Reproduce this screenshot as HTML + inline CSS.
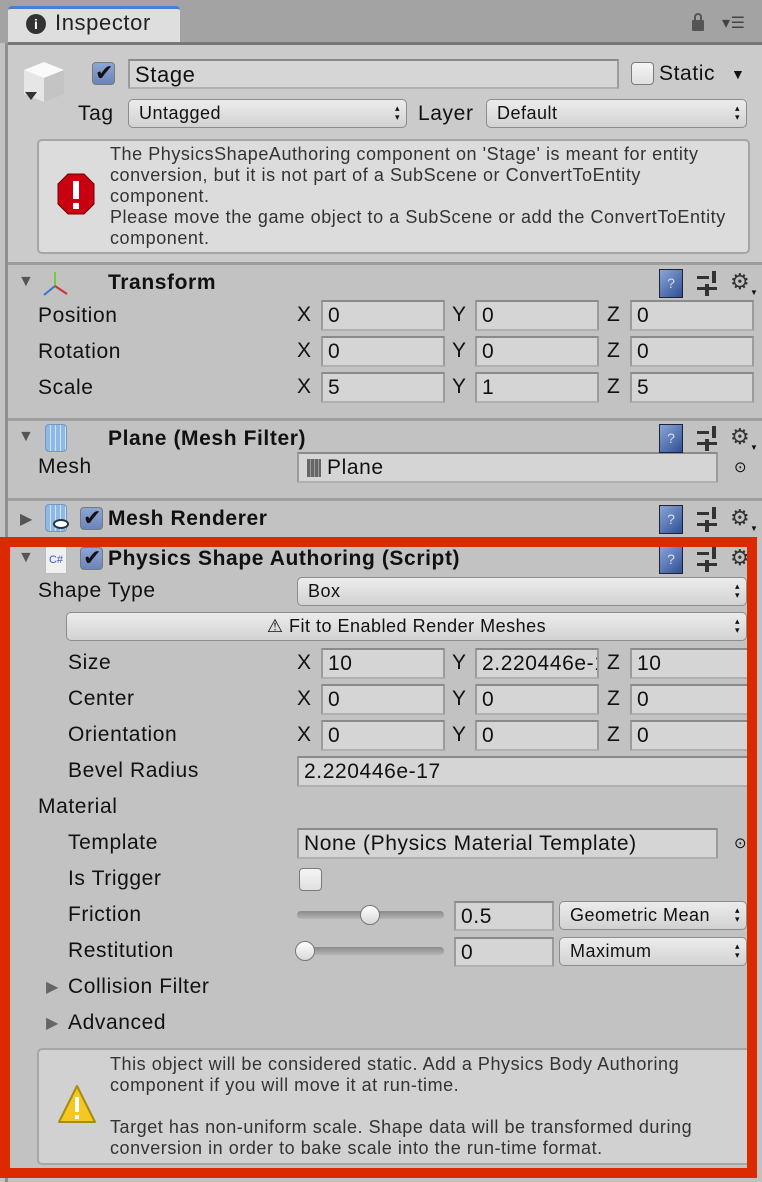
<!DOCTYPE html>
<html><head><meta charset="utf-8"><style>
*{box-sizing:border-box;margin:0;padding:0}
body{width:762px;height:1182px;background:#c2c2c2;font-family:"Liberation Sans",sans-serif;color:#111;position:relative;overflow:hidden}
.a{position:absolute}
.t{position:absolute;font-size:21px;line-height:24px;white-space:nowrap;letter-spacing:0.6px}
.f{position:absolute;background:#d5d5d5;border:2px solid #9b9b9b;border-top-color:#8a8a8a;border-bottom-color:#b0b0b0;font-size:21px;line-height:27px;padding-left:5px;overflow:hidden;white-space:nowrap;letter-spacing:0.6px}
.p{position:absolute;background:linear-gradient(#ececec,#d2d2d2);border:1px solid #8c8c8c;border-radius:5px;font-size:18px;line-height:27px;padding-left:10px;white-space:nowrap;letter-spacing:0.5px}
.p:after{content:"▴\A▾";white-space:pre;position:absolute;right:6px;top:4px;font-size:9px;line-height:9px}
.sep{position:absolute;left:8px;right:0;height:3px;background:#9d9d9d}
.hb{position:absolute;background:#d1d1d1;border:2px solid #a6a6a6;border-radius:5px}
.ht{position:absolute;font-size:18px;line-height:21px;color:#333;white-space:nowrap;letter-spacing:0.55px}
.cb{position:absolute;width:23px;height:23px;border:1px solid #7a7a7a;border-radius:4px;background:linear-gradient(#f5f5f5,#e0e0e0)}
.cbc{background:linear-gradient(#8ea6d6,#6b84b8);}
.cbc:after{content:"✔";position:absolute;left:2px;top:-3px;font-size:22px;color:#111}
.tri{position:absolute;font-size:16px;color:#555}
</style></head><body>
<div class="a" style="left:0;top:0;width:762px;height:43px;background:#a3a3a3"></div>
<div class="a" style="left:8px;top:6px;width:172px;height:37px;background:#dedede;border-top:3px solid #4a7fd0;border-radius:4px 4px 0 0"></div>
<div class="a" style="left:26px;top:14px;width:20px;height:20px;border-radius:50%;background:#333;color:#fff;font-size:14px;font-weight:bold;text-align:center;line-height:20px">i</div>
<div class="t" style="left:55px;top:11px;font-size:22px;color:#222">Inspector</div>
<div class="a" style="left:692px;top:20px;width:12px;height:11px;background:#555;border-radius:1px"></div>
<div class="a" style="left:694px;top:13px;width:8px;height:9px;border:2px solid #555;border-bottom:0;border-radius:4px 4px 0 0"></div>
<div class="t" style="left:722px;top:12px;font-size:16px;color:#444">▾☰</div>
<div class="a" style="left:8px;top:42px;width:754px;height:3px;background:#777"></div>
<div class="a" style="left:8px;top:45px;width:754px;height:217px;background:#cbcbcb"></div>
<div class="a" style="left:5px;top:43px;width:3px;height:1139px;background:#8f8f8f"></div>
<svg class="a" style="left:20px;top:58px" width="48" height="48"><polygon points="4,12 24,4 44,12 24,20" fill="#fafafa"/><polygon points="4,12 24,20 24,44 4,36" fill="#e6e6e6"/><polygon points="44,12 24,20 24,44 44,36" fill="#c4c4c4"/><polygon points="5,34 17,34 11,42" fill="#333"/></svg>
<div class="cb cbc" style="left:92px;top:62px"></div>
<div class="f" style="left:128px;top:59px;width:491px;height:30px;background:#d6d6d6;font-size:22px">Stage</div>
<div class="cb" style="left:631px;top:62px"></div>
<div class="t" style="left:659px;top:62px;font-size:21px">Static</div>
<div class="t" style="left:731px;top:62px;font-size:14px">▼</div>
<div class="t" style="left:78px;top:102px;font-size:21px">Tag</div>
<div class="p" style="left:128px;top:99px;width:279px;height:29px">Untagged</div>
<div class="t" style="left:418px;top:102px;font-size:21px">Layer</div>
<div class="p" style="left:486px;top:99px;width:261px;height:29px">Default</div>
<div class="hb" style="left:37px;top:139px;width:713px;height:115px;background:#dcdcdc"></div>
<svg class="a" style="left:56px;top:172px" width="40" height="44"><polygon points="12,2 28,2 38,12 38,32 28,42 12,42 2,32 2,12" fill="#c80010" stroke="#700" stroke-width="1"/><rect x="17" y="9" width="6" height="18" fill="#fff"/><rect x="17" y="31" width="6" height="6" fill="#fff"/></svg>
<div class="ht" style="left:110px;top:144px">The PhysicsShapeAuthoring component on 'Stage' is meant for entity<br>conversion, but it is not part of a SubScene or ConvertToEntity<br>component.<br>Please move the game object to a SubScene or add the ConvertToEntity<br>component.</div>
<div class="sep" style="top:262px"></div>
<div class="tri" style="left:18px;top:273px">▼</div>
<svg class="a" style="left:40px;top:270px" width="30" height="28"><line x1="15" y1="16" x2="15" y2="2" stroke="#7c3" stroke-width="2"/><line x1="15" y1="16" x2="4" y2="25" stroke="#37c" stroke-width="2"/><line x1="15" y1="16" x2="27" y2="24" stroke="#c33" stroke-width="2"/></svg>
<div class="t" style="left:108px;top:271px;font-weight:bold;font-size:21px">Transform</div>
<div class="t" style="left:38px;top:304px">Position</div>
<div class="t" style="left:38px;top:340px">Rotation</div>
<div class="t" style="left:38px;top:376px">Scale</div>
<div class="sep" style="top:418px"></div>
<div class="tri" style="left:18px;top:428px">▼</div>
<div class="a" style="left:45px;top:424px;width:22px;height:28px;border-radius:4px;background:repeating-linear-gradient(90deg,#8fb8e6 0 4px,#cfe3f7 4px 5px),#9cc3ec;border:1px solid #6d98c8"></div>
<div class="t" style="left:108px;top:427px;font-weight:bold">Plane (Mesh Filter)</div>
<div class="t" style="left:38px;top:455px">Mesh</div>
<div class="f" style="left:297px;top:452px;width:421px;height:31px;padding-left:28px">Plane</div>
<div class="a" style="left:307px;top:459px;width:14px;height:18px;background:repeating-linear-gradient(90deg,#666 0 3px,#999 3px 4px)"></div>
<div class="t" style="left:734px;top:456px;font-size:15px">⊙</div>
<div class="sep" style="top:498px"></div>
<div class="tri" style="left:20px;top:509px">▶</div>
<div class="a" style="left:45px;top:504px;width:22px;height:28px;border-radius:4px;background:repeating-linear-gradient(90deg,#8fb8e6 0 4px,#cfe3f7 4px 5px);border:1px solid #6d98c8"></div>
<div class="a" style="left:53px;top:519px;width:16px;height:10px;border-radius:50%;background:#fff;border:2px solid #234"></div>
<div class="cb cbc" style="left:80px;top:507px"></div>
<div class="t" style="left:108px;top:507px;font-weight:bold">Mesh Renderer</div>
<div class="sep" style="top:538px"></div>
<div class="tri" style="left:18px;top:549px">▼</div>
<div class="a" style="left:45px;top:546px;width:22px;height:28px;background:#f0f0f0;border:1px solid #bbb;font-size:11px;color:#3858c8;line-height:26px;text-align:center">C#</div>
<div class="cb cbc" style="left:80px;top:547px"></div>
<div class="t" style="left:108px;top:547px;font-weight:bold">Physics Shape Authoring (Script)</div>
<div class="t" style="left:38px;top:579px">Shape Type</div>
<div class="p" style="left:297px;top:577px;width:450px;height:29px">Box</div>
<div class="p" style="left:66px;top:612px;width:681px;height:29px;text-align:center;padding:0">⚠ Fit to Enabled Render Meshes</div>
<div class="t" style="left:68px;top:651px">Size</div>
<div class="t" style="left:68px;top:687px">Center</div>
<div class="t" style="left:68px;top:723px">Orientation</div>
<div class="t" style="left:68px;top:759px">Bevel Radius</div>
<div class="f" style="left:297px;top:756px;width:460px;height:31px">2.220446e-17</div>
<div class="t" style="left:38px;top:795px">Material</div>
<div class="t" style="left:68px;top:831px">Template</div>
<div class="f" style="left:297px;top:828px;width:421px;height:31px">None (Physics Material Template)</div>
<div class="t" style="left:734px;top:832px;font-size:15px">⊙</div>
<div class="t" style="left:68px;top:867px">Is Trigger</div>
<div class="cb" style="left:299px;top:868px"></div>
<div class="t" style="left:68px;top:903px">Friction</div>
<div class="a" style="left:297px;top:911px;width:147px;height:8px;border-radius:4px;background:linear-gradient(#8a8a8a,#b5b5b5)"></div>
<div class="a" style="left:360px;top:905px;width:20px;height:20px;border-radius:50%;background:linear-gradient(#fff,#d8d8d8);border:1px solid #777"></div>
<div class="f" style="left:454px;top:901px;width:100px;height:30px">0.5</div>
<div class="p" style="left:559px;top:901px;width:188px;height:29px">Geometric Mean</div>
<div class="t" style="left:68px;top:939px">Restitution</div>
<div class="a" style="left:297px;top:947px;width:147px;height:8px;border-radius:4px;background:linear-gradient(#8a8a8a,#b5b5b5)"></div>
<div class="a" style="left:295px;top:941px;width:20px;height:20px;border-radius:50%;background:linear-gradient(#fff,#d8d8d8);border:1px solid #777"></div>
<div class="f" style="left:454px;top:937px;width:100px;height:30px">0</div>
<div class="p" style="left:559px;top:937px;width:188px;height:29px">Maximum</div>
<div class="tri" style="left:46px;top:977px;color:#666">▶</div>
<div class="t" style="left:68px;top:975px">Collision Filter</div>
<div class="tri" style="left:46px;top:1013px;color:#666">▶</div>
<div class="t" style="left:68px;top:1011px">Advanced</div>
<div class="hb" style="left:37px;top:1048px;width:720px;height:117px"></div>
<svg class="a" style="left:57px;top:1084px" width="40" height="42"><polygon points="20,2 38,38 2,38" fill="#f3c820" stroke="#a88a10" stroke-width="2" stroke-linejoin="round"/><rect x="18" y="13" width="4" height="15" fill="#fff"/><rect x="18" y="31" width="4" height="4" fill="#fff"/></svg>
<div class="ht" style="left:110px;top:1054px">This object will be considered static. Add a Physics Body Authoring<br>component if you will move it at run-time.<br><br>Target has non-uniform scale. Shape data will be transformed during<br>conversion in order to bake scale into the run-time format.</div>
<script>
function vec(y,vals){var xs=[[297,321,124],[452,475,124],[607,630,124]],L=['X','Y','Z'],h='';
for(var i=0;i<3;i++){h+='<div class="t" style="left:'+xs[i][0]+'px;top:'+(y+3)+'px">'+L[i]+'</div><div class="f" style="left:'+xs[i][1]+'px;top:'+y+'px;width:'+xs[i][2]+'px;height:31px">'+vals[i]+'</div>';}
document.body.insertAdjacentHTML('beforeend',h);}
vec(300,['0','0','0']);vec(336,['0','0','0']);vec(372,['5','1','5']);
vec(648,['10','2.220446e-17','10']);vec(684,['0','0','0']);vec(720,['0','0','0']);
function icons(y){var h='<div class="a" style="left:659px;top:'+(y-14)+'px;width:24px;height:29px;background:linear-gradient(135deg,#8aa6d8,#2e4f94);border:1px solid #223;color:#dde;font-size:14px;text-align:center;line-height:27px">?</div>'+
'<div class="a" style="left:697px;top:'+(y-7)+'px;width:12px;height:3px;background:#333"></div><div class="a" style="left:697px;top:'+(y+4)+'px;width:20px;height:3px;background:#333"></div><div class="a" style="left:712px;top:'+(y-12)+'px;width:4px;height:12px;background:#333"></div><div class="a" style="left:705px;top:'+(y+1)+'px;width:4px;height:12px;background:#333"></div>'+
'<div class="t" style="left:730px;top:'+(y-13)+'px;font-size:22px;color:#333;letter-spacing:0">⚙</div><div class="t" style="left:750px;top:'+(y-2)+'px;font-size:8px">▼</div>';
document.body.insertAdjacentHTML('beforeend',h);}
icons(283);icons(438);icons(519);icons(559);
var r=document.createElement('div');r.className='a';r.style.cssText='left:0;top:537px;width:757px;height:641px;border:10px solid #dc2a00';document.body.appendChild(r);
var c=document.createElement('div');c.className='a';c.style.cssText='left:757px;top:537px;width:5px;height:645px;background:#c2c2c2';document.body.appendChild(c);
</script>
</body></html>
